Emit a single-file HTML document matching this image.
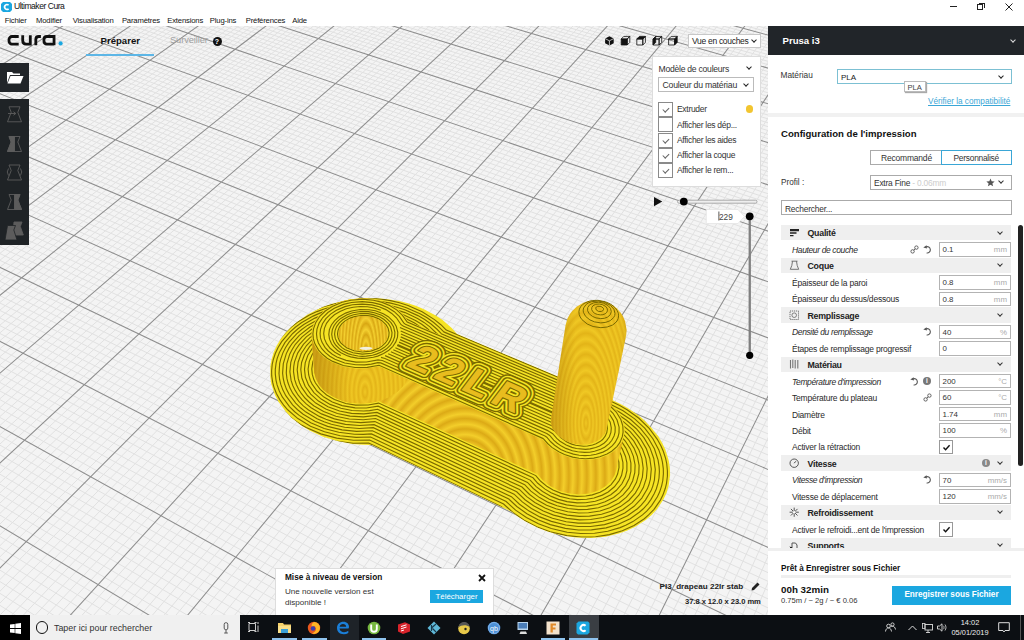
<!DOCTYPE html>
<html><head><meta charset="utf-8">
<style>
*{box-sizing:border-box;margin:0;padding:0}
html,body{width:1024px;height:640px;overflow:hidden;background:#fff;font-family:"Liberation Sans",sans-serif;color:#222}
.a{position:absolute;white-space:nowrap}
#vp{position:absolute;left:0;top:0;width:1024px;height:640px}
.title{left:14px;top:2px;font-size:8.6px;color:#111}
.menu{top:15.6px;font-size:7.7px;letter-spacing:-0.17px;color:#111}
.tb{background:#212529}
.chev{position:absolute;width:5px;height:5px;border-right:1.3px solid #333;border-bottom:1.3px solid #333;transform:rotate(45deg)}
.rp{left:768px;top:26px;width:256px;height:589px;background:#fff}
.lbl{font-size:8.3px;color:#333}
.inp{position:absolute;border:1px solid #bdbdbd;background:#fff;height:15px}
.hdr{position:absolute;left:781px;width:230px;height:15.5px;background:#f0f0f0}
.hdr b{position:absolute;left:26px;top:2.5px;font-size:8.6px;color:#222}
.row{position:absolute;left:792px;font-size:8.2px;color:#333}
.unit{position:absolute;right:4px;top:2px;font-size:8px;color:#aaa}
.val{position:absolute;left:4px;top:2px;font-size:8px;color:#333}
.cb{position:absolute;border:1px solid #999;background:#fff;width:14px;height:14px}
.ck{position:absolute;left:4px;top:2.5px;width:4px;height:7px;border-right:1.5px solid #222;border-bottom:1.5px solid #222;transform:rotate(45deg)}
.lcb{position:absolute;left:658px;width:15px;height:15px;border:1px solid #8a8a8a;background:#fff}
.lck{position:absolute;left:5px;top:3.2px;width:3.6px;height:6px;border-right:1px solid #666;border-bottom:1px solid #666;transform:rotate(45deg)}
.ltxt{position:absolute;left:677px;font-size:8.5px;letter-spacing:-0.3px;color:#333}
.tk{position:absolute;top:615px;height:25px}
</style></head><body>
<svg id="vp" width="1024" height="640" viewBox="0 0 1024 640">
<defs><clipPath id="cv"><rect x="0" y="26" width="768" height="589"/></clipPath></defs>
<g clip-path="url(#cv)">
<rect x="0" y="26" width="768" height="589" fill="#f4f4f4"/>
<path d="M762.2 21.1L772.5 23.8M751.8 21.3L772.4 26.9M739.6 21.1L772.3 30.0M729.1 21.3L772.2 33.1M706.5 21.4L771.9 39.4M694.4 21.2L771.8 42.6M683.9 21.4L771.7 45.8M671.8 21.2L771.6 49.0M659.7 21.0L771.4 52.2M649.2 21.3L771.3 55.5M637.1 21.0L773.0 59.3M626.7 21.3L772.9 62.7M614.6 21.1L772.7 66.0M592.0 21.1L772.5 72.8M581.6 21.4L772.4 76.3M569.5 21.2L772.2 79.7M559.0 21.4L772.1 83.2M547.0 21.2L772.0 86.7M536.5 21.5L771.9 90.3M524.5 21.3L771.7 93.9M512.5 21.0L771.6 97.5M502.0 21.3L771.5 101.1M479.5 21.3L771.2 108.5M467.5 21.1L773.0 112.8M457.0 21.4L772.8 116.5M445.1 21.2L772.7 120.3M434.6 21.4L772.6 124.2M422.6 21.2L772.4 128.0M412.1 21.5L772.3 131.9M400.2 21.2L772.2 135.8M388.2 21.0L772.0 139.8M365.8 21.1L771.8 147.8M355.3 21.3L771.6 151.9M343.4 21.1L771.5 155.9M333.0 21.4L771.3 160.1M321.0 21.2L771.2 164.2M310.6 21.4L771.0 168.4M298.7 21.2L772.9 173.3M288.2 21.4L772.8 177.6M276.3 21.2L772.7 181.9M253.9 21.3L772.4 190.7M242.1 21.1L772.2 195.1M231.6 21.3L772.1 199.6M219.7 21.1L771.9 204.1M209.3 21.4L771.8 208.7M197.4 21.2L771.6 213.3M187.0 21.4L771.5 217.9M175.1 21.2L771.3 222.6M164.7 21.4L771.2 227.3M8.9 21.7L-3.8 29.4M141.0 21.0L770.9 236.9M15.6 21.7L-4.7 34.1M130.6 21.3L772.9 242.5M22.3 21.7L-4.3 38.1M118.8 21.1L772.8 247.4M29.0 21.7L-3.9 42.1M108.3 21.3L772.6 252.4M35.7 21.7L-4.8 46.9M96.5 21.1L772.5 257.4M42.4 21.7L-4.4 51.0M86.0 21.4L772.3 262.4M49.1 21.7L-4.0 55.1M74.3 21.1L772.1 267.5M55.8 21.7L-4.9 60.1M63.8 21.4L772.0 272.7M62.6 21.8L-4.5 64.3M52.0 21.2L771.8 277.9M76.0 21.8L-3.7 72.9M29.8 21.2L771.5 288.4M82.7 21.8L-4.6 78.1M18.1 21.0L771.3 293.8M90.6 21.0L-4.2 82.5M7.6 21.3L771.2 299.2M97.3 21.0L-3.8 86.9M-4.1 21.1L771.0 304.7M104.1 21.0L-4.8 92.3M-4.6 25.0L770.8 310.2M110.8 21.0L-4.3 96.8M-3.8 29.4L770.7 315.8M117.5 21.0L-3.9 101.4M-4.2 33.4L772.9 322.3M124.2 21.0L-4.9 107.0M-4.7 37.5L772.7 328.0M130.9 21.0L-4.5 111.7M-3.9 42.1L772.5 333.7M144.4 21.0L-3.6 121.2M-4.8 50.4L772.2 345.4M151.1 21.0L-4.6 127.0M-4.0 55.1L772.0 351.3M157.8 21.0L-4.2 131.9M-4.5 59.4L771.9 357.3M164.6 21.0L-3.7 136.9M-5.0 63.7L771.7 363.4M171.3 21.0L-4.7 142.9M-4.1 68.6L771.5 369.5M178.0 21.0L-4.3 147.9M-4.6 73.0L771.4 375.7M184.8 21.0L-3.8 153.1M-3.7 78.0L771.2 382.0M191.5 21.0L-4.9 159.3M-4.2 82.5L771.0 388.3M198.3 21.1L-4.4 164.6M-4.7 87.0L770.8 394.7M211.7 21.1L-3.5 175.2M-4.3 96.8L773.0 408.7M218.5 21.1L-4.6 181.8M-4.8 101.5L772.8 415.3M225.2 21.1L-4.1 187.3M-4.0 106.9L772.6 422.0M232.0 21.1L-3.6 192.8M-4.5 111.7L772.5 428.7M238.7 21.1L-4.7 199.6M-5.0 116.5L772.3 435.6M245.4 21.1L-4.2 205.3M-4.1 122.0L772.1 442.5M252.2 21.1L-3.7 211.1M-4.6 127.0L771.9 449.5M258.9 21.1L-4.8 218.1M-3.7 132.6L771.7 456.5M265.7 21.1L-4.4 224.0M-4.2 137.7L771.6 463.7M279.2 21.1L-5.0 237.3M-3.8 148.7L771.2 478.2M286.0 21.1L-4.5 243.5M-4.3 154.0L771.0 485.6M292.7 21.1L-4.0 249.7M-4.9 159.3L770.8 493.1M299.5 21.1L-3.5 256.0M-3.9 165.3L770.6 500.7M306.2 21.1L-4.6 263.7M-4.5 170.8L770.4 508.3M313.0 21.1L-4.1 270.2M-3.5 177.0L773.0 517.3M319.7 21.1L-3.6 276.7M-4.1 182.6L772.8 525.1M326.5 21.1L-4.8 284.7M-4.6 188.2L772.6 533.1M333.3 21.1L-4.3 291.4M-3.6 194.6L772.4 541.1M346.8 21.1L-5.0 306.5M-4.7 206.3L772.0 557.5M353.6 21.1L-4.4 313.6M-3.8 213.0L771.8 565.9M360.3 21.1L-3.9 320.7M-4.3 219.0L771.6 574.3M367.1 21.1L-3.4 327.9M-4.9 225.1L771.4 582.9M373.9 21.1L-4.6 336.6M-3.9 232.0L771.2 591.6M380.7 21.1L-4.1 344.0M-4.5 238.2L771.0 600.3M387.4 21.1L-3.5 351.6M-3.4 245.3L770.8 609.2M394.2 21.1L-4.8 360.7M-4.0 251.7L770.5 618.2M401.0 21.1L-4.2 368.4M-4.6 258.2L752.5 618.8M414.5 21.1L-4.9 385.8M-4.2 272.2L713.3 618.6M421.3 21.2L-4.4 393.9M-4.8 279.0L695.2 619.2M428.1 21.2L-3.8 402.0M-3.7 286.7L677.1 619.8M434.9 21.2L-3.2 410.3M-4.3 293.6L656.2 619.0M441.7 21.2L-4.5 420.5M-4.9 300.6L638.1 619.6M448.4 21.2L-4.0 429.0M-3.8 308.6L617.1 618.8M455.2 21.2L-3.4 437.7M-4.5 315.8L599.0 619.4M462.0 21.2L-4.7 448.3M-3.4 324.0L578.1 618.6M468.8 21.2L-4.1 457.2M-4.0 331.5L560.0 619.2M482.4 21.2L-4.9 477.4M-3.5 347.5L521.0 619.0M489.2 21.2L-4.3 486.8M-4.1 355.3L502.9 619.6M496.0 21.2L-3.7 496.3M-4.8 363.1L482.1 618.8M502.8 21.2L-3.1 506.0M-3.6 372.1L463.9 619.4M509.6 21.2L-4.5 517.7M-4.3 380.2L443.2 618.6M516.4 21.2L-3.8 527.7M-4.9 388.4L425.0 619.2M523.2 21.2L-3.2 537.9M-3.8 397.7L406.9 619.9M530.0 21.2L-4.7 550.3M-4.4 406.1L386.2 619.0M536.8 21.2L-4.0 560.8M-3.3 415.7L368.0 619.7M550.4 21.2L-4.9 584.4M-4.6 433.3L329.2 619.5M557.2 21.2L-4.2 595.5M-3.4 443.3L308.5 618.7M564.0 21.2L-3.5 606.7M-4.1 452.4L290.4 619.3M570.8 21.2L-2.9 618.1M-4.8 461.7L272.2 619.9M577.6 21.2L8.8 618.2M-3.6 472.2L251.6 619.1M584.4 21.2L20.4 618.3M-4.3 481.7L233.4 619.7M591.3 21.2L32.1 618.5M-5.0 491.4L212.9 618.9M598.1 21.2L43.7 618.6M-3.7 502.5L194.7 619.5M604.9 21.2L55.4 618.7M-4.4 512.5L174.1 618.7M618.5 21.2L78.7 618.9M-3.9 534.2L137.8 619.9M625.3 21.2L90.3 619.0M-4.6 544.7L117.3 619.1M632.2 21.2L102.0 619.1M-3.3 556.7L99.1 619.7M639.0 21.3L113.7 619.2M-4.1 567.6L78.7 618.9M645.8 21.3L125.3 619.3M-4.8 578.6L60.5 619.5M652.6 21.3L137.0 619.4M-3.5 591.2L40.1 618.7M659.5 21.3L148.7 619.5M-4.2 602.7L21.9 619.3M666.3 21.3L160.4 619.6M-2.9 615.7L3.7 619.9M673.1 21.3L172.1 619.7M686.8 21.3L195.5 619.9M693.6 21.3L209.0 617.8M700.5 21.3L220.7 617.9M707.3 21.3L232.4 618.0M714.1 21.3L244.1 618.1M721.0 21.3L255.8 618.2M727.8 21.3L267.5 618.3M734.6 21.3L279.2 618.4M741.5 21.3L290.9 618.5M755.2 21.3L314.4 618.7M762.0 21.3L326.1 618.8M768.9 21.3L337.8 618.9M773.0 25.2L349.6 619.0M772.6 35.4L361.3 619.1M772.9 45.1L373.0 619.2M772.5 55.9L384.8 619.3M772.7 66.0L396.5 619.4M773.0 76.4L408.3 619.6M772.9 99.0L431.8 619.8M772.5 111.1L443.6 619.9M772.8 122.7L455.3 620.0M772.4 135.5L468.5 617.8M772.6 147.7L480.3 617.9M772.9 160.1L492.1 618.0M772.5 174.1L503.8 618.1M772.8 187.2L515.6 618.2M772.4 202.0L527.4 618.3M772.9 230.3L550.9 618.5M772.5 246.3L562.7 618.6M772.8 261.6L574.5 618.8M772.3 278.6L586.3 618.9M772.6 294.8L598.1 619.0M772.9 311.5L609.9 619.1M772.5 330.2L621.7 619.2M772.8 348.0L633.5 619.3M772.3 368.0L645.3 619.4M773.0 406.7L668.9 619.6M772.5 428.7L680.8 619.7M772.8 449.8L692.6 619.8M772.3 473.5L704.4 619.9M772.6 496.2L717.3 617.7M773.0 519.7L729.1 617.8M772.5 546.1L741.0 617.9M772.8 571.5L752.8 618.1M772.3 600.0L764.6 618.2" stroke="#e1e1e1" stroke-width="1" fill="none"/>
<path d="M717.0 21.1L772.1 36.2M604.1 21.3L772.6 69.4M490.0 21.1L771.3 104.8M377.8 21.3L771.9 143.8M264.4 21.0L772.5 186.3M2.1 21.7L-4.2 25.6M152.8 21.2L771.0 232.1M69.3 21.8L-4.1 68.6M41.6 21.4L771.7 283.1M137.7 21.0L-4.0 116.4M-4.4 46.2L772.4 339.5M205.0 21.1L-4.0 169.9M-3.9 92.2L770.6 401.1M272.4 21.1L-3.9 230.0M-4.7 142.9L771.4 470.9M340.0 21.1L-3.8 298.3M-4.2 200.4L772.2 549.3M407.8 21.1L-3.7 376.3M-3.6 265.6L734.4 619.4M475.6 21.2L-3.5 466.3M-4.6 339.0L541.9 619.8M543.6 21.2L-3.4 571.4M-3.9 424.4L347.3 618.9M611.7 21.2L67.0 618.8M-3.2 523.9L156.0 619.3M680.0 21.3L183.8 619.8M748.3 21.3L302.7 618.6M772.6 88.0L420.0 619.7M772.6 215.9L539.1 618.4M772.6 387.0L657.1 619.5" stroke="#8e8e8e" stroke-width="1.05" fill="none"/>
<clipPath id="bc"><path d="M612.9 399.8L457 334.1L451.7 328L442.6 320.1L435.7 315.4L424.5 309.4L416.4 306L408 303.2L399.2 301L385.7 298.9L376.5 298.2L362.7 298.4L353.5 299.2L344.4 300.7L331.3 304.1L322.9 307.1L314.9 310.7L307.3 314.8L297 321.9L290.9 327.2L285.4 333L280.7 339.1L276.8 345.5L273.7 352.2L271.6 359.2L270.3 366.3L270.2 377.1L271.3 384.3L274.9 395L278.5 401.8L285.7 411.6L291.6 417.7L302.1 425.9L310 430.7L323.1 436.7L337.5 441.1L352.6 443.9L363 444.8L372.1 444.9L511.8 511.8L517.8 516.4L525.7 521.5L538.5 528L547.6 531.5L557.1 534.3L566.7 536.3L576.5 537.6L591.1 538L605.4 536.7L618.9 533.5L627.3 530.5L635.2 526.8L645.7 520L651.9 514.8L657.1 509L663.4 499.6L666.5 492.9L668.6 486L670.1 475.2L669.9 468L668.8 460.7L665.5 450L662.2 443L658.2 436.3L650.7 426.9L645 421L638.6 415.5L628.1 408.2L620.5 404L612.6 400.3L612.9 399.8Z"/></clipPath>
<path d="M612.9 399.8L457 334.1L451.7 328L442.6 320.1L435.7 315.4L424.5 309.4L416.4 306L408 303.2L399.2 301L385.7 298.9L376.5 298.2L362.7 298.4L353.5 299.2L344.4 300.7L331.3 304.1L322.9 307.1L314.9 310.7L307.3 314.8L297 321.9L290.9 327.2L285.4 333L280.7 339.1L276.8 345.5L273.7 352.2L271.6 359.2L270.3 366.3L270.2 377.1L271.3 384.3L274.9 395L278.5 401.8L285.7 411.6L291.6 417.7L302.1 425.9L310 430.7L323.1 436.7L337.5 441.1L352.6 443.9L363 444.8L372.1 444.9L511.8 511.8L517.8 516.4L525.7 521.5L538.5 528L547.6 531.5L557.1 534.3L566.7 536.3L576.5 537.6L591.1 538L605.4 536.7L618.9 533.5L627.3 530.5L635.2 526.8L645.7 520L651.9 514.8L657.1 509L663.4 499.6L666.5 492.9L668.6 486L670.1 475.2L669.9 468L668.8 460.7L665.5 450L662.2 443L658.2 436.3L650.7 426.9L645 421L638.6 415.5L628.1 408.2L620.5 404L612.6 400.3L612.9 399.8Z" fill="#f6e424"/>
<path clip-path="url(#bc)" d="M409 355.3L404.9 349.1L399.2 343.6L393.9 339.9L385.9 336.1L377.2 333.5L367.9 332.1L358.4 332L349 333.3L340 335.8L331.8 339.6L324.7 344.4L320.2 348.7L315.6 355L312.8 361.8L311.8 368.9L312.3 374.4L313.8 379.6L315.5 383L320.2 389.4L326.6 395L334.4 399.6L345.7 403.5L355.7 405.1L368.3 405L378.6 403.1L535.8 475.6L540.7 481.3L547.2 486.6L553 490L561.2 493.4L570 495.6L576.9 496.3L585.7 496L592.3 494.9L600 492.2L605.3 489.3L611.1 484.6L615.4 478.9L617.6 474.1L619 467.5L618.9 462.3L617.3 455.4L614.1 448.9L610.6 444.2L604.9 438.7L598.1 433.9L592.3 431L584.3 428.2L577.8 426.8L571.2 426.2L409 355.3Z M411.9 353.5L407.9 347.7L401.7 341.8L394.3 336.9L385.5 333.1L378.1 331L368.1 329.6L357.9 329.6L347.9 330.9L338.3 333.7L329.8 337.6L322.1 342.7L317.2 347.4L312.3 354.2L309.3 361.3L308.1 369L308.7 375L310.3 380.5L312.1 384.1L317 391L323.9 397.1L332.3 402L342.2 405.6L355.1 407.9L366.3 408L378.1 406.2L533 477.8L537.8 483.3L544.7 488.9L551.1 492.7L559.9 496.4L569.6 498.8L577.3 499.6L586.7 499.3L594 498L602.3 495.1L608.2 491.9L614.4 486.8L619.1 480.6L621.6 475.3L623 468.2L622.9 462.4L621.2 455.2L618.5 449.5L613.9 442.9L609.1 438.1L602 432.7L595.9 429.4L587.5 426.1L580.4 424.3L572 423.3L411.9 353.5Z M414.8 351.7L409.7 345L402.7 338.8L396.1 334.8L386.7 330.7L376.9 328.2L366.2 327L355.3 327.3L344.7 329.1L334.6 332.3L325.5 336.8L317.7 342.6L312.7 347.9L307.9 355.2L305.2 362.9L304.5 369.4L305.4 377.3L308.6 385.2L313.9 392.6L321.2 399.1L330.1 404.4L340.9 408.3L352.1 410.5L363.7 411L369.6 410.6L377.6 409.3L530.2 480.1L536.2 486.6L542.6 491.5L551.2 496.4L558.6 499.4L567 501.6L577.1 502.9L585.6 502.8L595.3 501.3L602.8 498.8L610.8 494.7L616.4 490.3L621.9 483.8L625.4 476.8L626.9 470.6L626.9 462.9L625.5 456.4L622.3 448.9L618.3 443L612.2 436.6L604.5 430.8L597.6 426.9L588.6 423.4L580.8 421.5L572.7 420.5L414.8 351.7Z M417.6 350L412.3 343.2L404.8 336.8L396.3 331.8L386.1 327.8L377.3 325.7L365.9 324.5L354.4 324.9L343.7 326.7L333 330.1L323.4 334.9L315.1 341L309.6 346.7L304.5 354.5L301.6 362.5L300.8 369.5L301.8 377.8L305.1 386.3L310.7 394.2L318.5 401.1L328 406.7L339.5 411L351.5 413.4L363.9 413.9L377 412.4L527.5 482.4L533.3 488.5L540.2 494L549.3 499.2L557.3 502.4L566.5 504.9L577.3 506.2L586.6 506.1L596.9 504.5L605.1 501.8L613.6 497.4L619.7 492.6L625.6 485.6L629.3 478.2L630.9 471.3L630.9 463.1L629.4 456.1L625.9 448.1L621.6 441.7L615.1 434.9L606.8 428.6L599.8 424.7L591.7 421.4L581.9 418.8L573.5 417.6L417.6 350Z M420.3 348.2L415.2 341.8L407.2 335L398.3 329.7L387.5 325.6L378.1 323.3L366.1 322L353.9 322.4L342 324.5L330.7 328.2L321.2 333L312.4 339.4L306.5 345.5L301.1 353.8L298.1 362.2L297.2 369.7L298.2 378.4L299.6 383L301.7 387.4L307.6 395.8L315.7 403.1L325.8 409.1L337.4 413.5L350.1 416.1L363.3 416.8L376.3 415.4L524.7 484.7L530.9 491.1L539.6 497.6L548.3 502.4L557 505.7L568.2 508.5L578.4 509.6L587.6 509.4L598.4 507.7L607.4 504.8L616.4 500.1L623.1 494.9L629 487.9L632.6 481L634.8 472.7L635.1 465L633.4 456.4L630.4 448.9L625.3 441L619.4 434.5L610.8 427.6L603.4 423.3L593.7 419L584.4 416.4L574.4 414.8L420.3 348.2Z M423.1 346.4L416.2 338.4L408 332L399.5 327.3L388.1 323L376.7 320.5L364 319.5L351.1 320.3L340.8 322.2L329 326.1L319 331.1L309.7 337.9L303.4 344.4L297.7 353.1L294.5 361.8L293.7 366.7L293.5 371.6L294.7 379.7L296.3 384.5L298.6 389.2L301.5 393.7L305 398L309.1 402L313.7 405.7L323.6 411.5L335.9 416.2L349.3 419L363.3 419.7L375.6 418.5L522 487.1L529.6 494.5L537.2 500.1L546.6 505.2L555.9 508.8L567.7 511.8L578.7 513L588.5 512.8L600 511L609.8 507.8L619.2 502.9L626.4 497.2L632.6 489.8L636.5 482.3L638.8 473.6L639.1 465.3L637.3 456.2L634 448.1L628.6 439.8L622.2 432.8L613.9 426L605.2 420.9L595 416.5L585 413.6L575.2 412L423.1 346.4Z M425.8 344.6L418.9 336.9L409.5 329.7L399.5 324.4L387.3 320.2L376.4 318L363 317.1L349.5 318L337.5 320.5L325.3 324.9L316 329.7L306.3 336.9L299.2 344.7L296 349.2L293.5 354L290.8 362.3L289.9 371.8L291.1 380.4L292.8 385.5L295.2 390.4L298.2 395.2L301.9 399.7L306.2 403.9L311.1 407.8L321.5 413.9L334.4 418.9L346.2 421.5L360.8 422.6L374.9 421.6L519.4 489.4L526.8 496.6L534.8 502.5L545 508.1L554.8 512L567.2 515.1L579.1 516.4L589.5 516.1L601.6 514.2L611 511.3L620.4 506.6L629 500.2L635.3 493.1L639.4 486.1L642.4 477.1L643.2 468.2L641.9 458.6L638.9 449.9L633.7 440.9L627.2 433.2L617.9 425.2L609.9 420L601.2 415.8L588.8 411.6L576.1 409.3L425.8 344.6Z M428.4 342.8L421.7 335.4L411.8 327.8L401.3 322.3L388.5 317.9L374.9 315.3L360.7 314.7L346.7 316L335.2 318.5L322.4 323.3L311.9 329L302.1 336.8L295.4 344.3L292.3 349.2L289.7 354.2L286.8 363.8L286.3 373L286.9 378.4L288 382.8L290 388.1L292.7 393.2L298.8 401.4L303.3 405.9L308.5 410L319.3 416.4L325.9 419.2L332.9 421.6L345.4 424.4L359.4 425.5L374.1 424.7L516.7 491.8L525 499.7L533.6 505.8L543.3 511L553.6 515.1L566.7 518.4L579.5 519.8L590.5 519.5L603.2 517.5L613.1 514.4L623.2 509.4L632.2 502.6L639 495L643.3 487.6L646.4 478.1L647.2 468.6L645.9 458.6L642.6 449.2L637.1 439.9L630.2 431.6L620.3 423.2L611.8 417.8L602.6 413.3L589.6 408.9L577 406.6L428.4 342.8Z M431.1 341L423 332.5L412.4 324.9L401.9 319.7L388.4 315.3L375.5 312.9L360.7 312.3L346 313.6L333.9 316.3L320.5 321.2L309.7 327.2L299.3 335.3L292.3 343.3L288.9 348.4L286.3 353.6L283.3 363.6L282.6 373.3L283.3 379L284.4 383.5L286.4 389.1L289.2 394.5L295.7 403.1L300.5 407.8L305.9 412.1L317.1 418.8L324 421.8L331.4 424.3L344.6 427.3L359.2 428.5L373.3 427.7L514.1 494.2L522.3 501.9L531.4 508.5L541.6 514L552.5 518.3L566.2 521.7L578.1 523.1L589.8 523.1L602.8 521.3L613.4 518.2L624.8 512.9L634.1 506.3L641.8 498.1L647.2 489.1L648.9 484.8L650.4 479.1L651.3 469L649.8 458.5L646.3 448.6L640.5 438.8L633.2 430.1L624 422.1L615.1 416.3L604.1 410.8L591.9 406.6L577.9 403.8L431.1 341Z M433.7 339.2L429.6 334.6L424.7 330.1L414.6 323L403.7 317.6L389.6 313L376.1 310.6L360.7 309.9L345.4 311.2L332.6 314.1L318.7 319.2L307.4 325.4L301.7 329.5L296.6 333.9L289.1 342.2L285.6 347.5L282.8 353.1L280.8 358.8L279.7 363.4L279 373.6L279.6 379.5L280.7 384.2L282.9 390.1L285.8 395.7L292.6 404.8L297.6 409.7L303.2 414.3L314.9 421.2L327.6 426.4L342 429.9L356.5 431.4L372.4 430.8L511.4 496.7L519.5 504.2L529.1 511.1L539.8 516.9L551.4 521.4L565.8 525L578.2 526.5L590.6 526.5L604.5 524.6L615.6 521.3L627.5 515.8L637.4 508.7L641.2 505.2L645.4 500.1L651.1 490.6L652.8 486.1L654.4 480.1L655.3 469.4L653.8 458.5L650 447.9L643.9 437.7L636.1 428.5L626.5 420.2L617.2 414.1L605.5 408.3L592.8 404L578.8 401.1L433.7 339.2Z M436.2 337.4L427.3 328.5L421.7 324.2L415.5 320.4L403.4 314.7L388.5 310.2L375 308L358.9 307.5L343 309.2L329.3 312.5L314.9 318.1L303.8 324.5L298 328.8L292.7 333.5L284.9 342.7L279.4 352.5L277.2 358.4L276.1 363.2L275.3 369.4L275.3 373.9L276 380.1L277.1 384.9L279.3 391L282.3 396.9L289.5 406.6L294.7 411.7L299.2 415.4L310.7 422.7L324.2 428.5L338.7 432.3L354.3 434.2L363.3 434.4L371.5 433.9L508.8 499.1L516.8 506.5L526.9 513.7L538.1 519.8L550.3 524.6L565.3 528.4L578.4 530L591.4 529.9L606.1 527.9L617.8 524.5L630.2 518.7L639.3 512.3L643.3 508.8L648 503.6L651 499.4L654.3 493.6L656.3 489L658.1 482.8L659 478L659.4 471.5L659.1 466.6L658.1 460.1L654.4 448.8L648.4 438.2L640.4 428.3L630.6 419.5L619.3 411.9L606.9 405.8L593.7 401.3L579.8 398.5L436.2 337.4Z M438.8 335.5L429.9 326.9L424 322.4L417.6 318.5L405.1 312.6L389.6 307.9L375.5 305.6L358.8 305.1L342.2 306.9L328 310.3L320.4 312.9L313.1 316.1L301.4 322.8L295.3 327.3L289.9 332.1L281.7 341.6L278.1 347.5L275.3 353.5L273.2 359.8L272.2 364.5L271.6 370.9L271.7 375.9L272.7 382.4L273.9 387.1L276.4 393.5L279.8 399.6L283.9 405.5L287.7 409.8L297.9 418.6L310.5 426.2L324.5 431.8L340.1 435.7L356.1 437.3L370.6 437L506.2 501.6L515.6 510.1L526.4 517.5L538.4 523.7L551.3 528.5L567.2 532.2L580.9 533.5L594.6 533.2L607.7 531.2L620.1 527.6L625.7 525.3L632.9 521.6L642.5 514.9L646.7 511.1L651.6 505.6L657.4 496.7L659.6 492.1L661.7 485.6L662.8 480.5L663.4 473.7L663.3 468.6L662.4 461.8L661.1 456.6L658.8 449.9L652.9 438.7L644.7 428.2L634.7 418.9L623.1 410.8L610.4 404.2L596.6 399.3L580.7 395.8L438.8 335.5Z M441.3 333.7L436.8 329L431 324L424.7 319.6L417.9 315.6L404.9 309.8L396.9 307.2L388.7 305.2L373.7 303.1L356.4 302.9L339.2 305L324.8 308.7L316.9 311.6L309.4 315L297.3 322.2L291.2 327L285.7 332.2L277.6 342L274 348.2L271.8 352.9L269.7 359.4L268.6 364.4L268 371.1L268.1 376.2L269 383L270.3 388L272.9 394.6L275.4 399.4L279.6 405.6L283.2 410L288.8 415.6L293.6 419.6L300.6 424.4L306.2 427.6L320.8 433.9L336.7 438.1L353.6 440.2L369.7 440.1L503.6 504L512.8 512.4L524.1 520.2L536.6 526.7L550.1 531.7L566.9 535.6L581.3 537L595.6 536.7L609.4 534.6L622.3 530.8L634 525.5L644.3 518.7L648.6 514.9L654 509.3L660.4 500.1L662.9 495.1L665.3 488.3L666.5 483.3L667.4 476.2L667.4 470.7L666.7 463.5L665.6 458.3L663.3 451.3L661 446L657.3 439.3L649.2 428.4L638.9 418.3L627.1 409.8L619.7 405.6L612 401.8L597.5 396.6L581.7 393.2L441.3 333.7Z M443.8 331.9L439.6 327.6L433.7 322.5L427.1 317.8L420 313.7L406.4 307.7L398.2 305L389.6 302.9L374.2 300.7L365.2 300.3L356.2 300.5L347.3 301.3L338.4 302.7L323.4 306.6L315.2 309.6L307.4 313.1L295 320.5L288.6 325.4L282.8 330.8L274.4 341.1L270.7 347.4L268.4 352.3L266.1 359.1L265 364.3L264.3 371.3L264.4 376.5L265.4 383.6L266.7 388.8L269.4 395.7L272 400.7L276.2 407.1L280.1 411.8L285.9 417.6L290.8 421.7L298.1 426.7L304 430.1L312.4 434.1L319.1 436.6L328.4 439.4L335.7 441L353.2 443.2L368.7 443.1L501 506.5L510.1 514.7L521.8 522.8L534.9 529.7L549 535L558.8 537.6L566.6 539L581.7 540.5L596.6 540.2L611 538L624.5 534L636.7 528.4L647.4 521.3L652 517.4L657.5 511.5L664.2 501.9L666.8 496.6L669.3 489.5L670.6 484.3L671.4 476.9L671.5 471.1L670.7 463.6L669.5 458.3L667.1 451L664.7 445.4L660.8 438.4L652.4 427.1L641.5 416.6L629.4 407.8L621.6 403.3L613.6 399.5L598.4 394L582.6 390.6L443.8 331.9Z M446.3 330.1L440.9 324.7L434.5 319.6L422.1 311.8L408 305.5L399.4 302.8L390.6 300.6L381.5 299.1L372.3 298.2L362.9 297.9L353.6 298.3L344.4 299.3L335.2 300.9L319.9 305.1L311.6 308.3L303.6 312.1L290.8 320.1L284.3 325.3L278.5 331L273.4 337L270.2 341.7L266.5 348.3L264.3 353.6L262.1 360.6L261.1 365.9L260.6 373.2L260.9 378.8L262.1 386.1L263.7 391.4L266.6 398.5L269.6 403.7L274.2 410.3L278.3 415L284.6 421L289.9 425.2L301.7 432.6L310.5 436.7L317.3 439.3L332 443.4L342.3 445.2L350.3 446.1L367.7 446.2L498.4 509.1L509.5 518.7L522 527L535.9 533.9L547.9 538.2L563.3 542L579 543.9L594.7 543.9L609.9 542L624.1 538.2L637.2 532.6L648.6 525.4L654 521.1L659.9 515.1L667.2 505.2L669.8 500.2L672.7 492.9L674.3 487L675.4 479.3L675.6 473.8L675 466L673.8 459.9L671.5 452.2L669.4 446.9L665.6 439.5L662 433.9L656.7 427.2L646.2 416.5L639.1 410.8L631.6 405.7L623.6 401.1L615.1 397.1L599.3 391.5L583.6 387.9L446.3 330.1Z" fill="none" stroke="#7a6900" stroke-width="1.15"/>
<defs><radialGradient id="mw" gradientUnits="userSpaceOnUse" cx="465" cy="476" r="9" spreadMethod="repeat" gradientTransform="translate(465 476) scale(1 1.15) translate(-465 -476)"><stop offset="0" stop-color="#f3ce2a"/><stop offset="0.55" stop-color="#dcaa16"/><stop offset="1" stop-color="#f3ce2a"/></radialGradient><radialGradient id="ml" gradientUnits="userSpaceOnUse" cx="365" cy="392" r="8" spreadMethod="repeat" gradientTransform="translate(365 392) scale(0.55 1.3) translate(-365 -392)"><stop offset="0" stop-color="#f0c824"/><stop offset="0.55" stop-color="#e3b418"/><stop offset="1" stop-color="#f0c824"/></radialGradient></defs>
<path d="M620.2 452.2L624.6 432.3L624.4 427.4L623.4 422.5L621.4 417.7L617.4 411.6L612.1 406.1L605.6 401.4L600.2 398.5L592.3 395.5L584.1 393.6L576.9 393L407.8 321.3L404.8 316.3L399.4 310.8L394.5 307.2L386.9 303.2L378.4 300.4L367 298.6L355.2 298.7L343.8 300.8L333.3 304.8L324.4 310.4L317.5 317.4L313.8 323.7L311.9 330.5L311.7 335.6L314 370.6L315.3 377.5L318.5 384L323.4 389.9L329.9 395L337.7 399.1L348.8 402.4L358.4 403.6L368.1 403.3L378.8 401.2L537.5 474.3L542.5 480.1L550.4 486.3L559.9 490.9L568.2 493.3L578.8 494.4L589.2 493.4L598.6 490.4L606.5 485.6L611.3 480.6L614.7 474.9L616.2 470.3L620.2 452.2Z" fill="url(#mw)"/>
<path d="M359.9 298.4L348.3 299.7L339.5 302.2L331.4 305.8L324.4 310.4L318.7 315.9L314.6 322.1L312.2 328.7L311.7 335.6L314.2 372.3L316 379.1L319.6 385.5L323.4 389.9L328.2 393.8L337.7 399.1L344.2 401.4L351.2 402.9L363.2 403.6L375.2 402.1L382 400.2L388.4 397.6L397.5 391.7L401.9 387.5L405.4 382.9L408 378L409.8 371.2L410.7 332.7L409.7 325.9L406.8 319.4L402.3 313.5L396.2 308.3L388.9 304.1L380.6 301L371.7 299.1L359.9 298.4Z" fill="url(#ml)"/>
<defs><linearGradient id="sl" gradientUnits="userSpaceOnUse" x1="314" y1="0" x2="350" y2="0"><stop offset="0" stop-color="#8a5a00" stop-opacity="0.35"/><stop offset="1" stop-color="#8a5a00" stop-opacity="0"/></linearGradient></defs>
<path d="M359.9 298.4L348.3 299.7L339.5 302.2L331.4 305.8L324.4 310.4L318.7 315.9L314.6 322.1L312.2 328.7L311.7 335.6L314.2 372.3L316 379.1L319.6 385.5L323.4 389.9L328.2 393.8L337.7 399.1L344.2 401.4L351.2 402.9L363.2 403.6L375.2 402.1L382 400.2L388.4 397.6L397.5 391.7L401.9 387.5L405.4 382.9L408 378L409.8 371.2L410.7 332.7L409.7 325.9L406.8 319.4L402.3 313.5L396.2 308.3L388.9 304.1L380.6 301L371.7 299.1L359.9 298.4Z" fill="url(#sl)"/>
<path d="M542.8 439.7L547.9 445.5L552.6 449.3L559.9 453.7L566 456.3L574.6 458.7L581.2 459.6L587.8 459.8L594.3 459.2L600.4 457.9L607.9 455L612.8 452.1L618.1 447.3L621.1 443.2L623.7 437.1L624.6 432.3L624.2 425.8L622.2 419.3L617.4 411.6L610.6 404.8L602.1 399.4L596.3 396.8L590.3 394.9L584.1 393.6L576.9 393L407.8 321.3L403.6 314.9L397.9 309.5L390.9 305.1L382.8 301.7L373.9 299.4L362.3 298.4L350.6 299.3L341.6 301.5L331.4 305.8L324.4 310.4L318.7 315.9L314.6 322.1L312.2 328.7L311.6 333.9L312.1 339.1L313.7 344.1L317.4 350.5L321.4 354.9L326.3 358.9L331.9 362.2L342.9 366.4L355 368.5L367.5 368.3L378.6 366.2L542.8 439.7Z M383.8 343.3L377.8 347.8L370.1 350.5L362.8 351.2L354.3 350.1L347 347.1L344.4 345.2L341.6 342.4L340.1 340L338.9 336.7L338.6 334.1L339 330.7L340.3 327.4L343.2 323.6L346.4 321L351.2 318.4L355.6 317L361.5 316.1L367.5 316.3L373.2 317.4L378.3 319.5L381.9 321.8L385.3 325.3L387.1 328.4L388.1 332.6L387.8 336.1L386.2 340.3L383.8 343.3Z" fill="#f6e424" fill-rule="evenodd"/>
<path d="M543.3 438.6L547.6 443.5L551.9 447.4L558.8 451.8L564.5 454.5L572.7 457.1L579 458.3L585.5 458.7L593.8 458.1L599.8 456.8L607 454L611.7 451.2L616.9 446.6L619.8 442.6L622.3 436.7L623.1 432.1L622.8 425.8L620.8 419.5L616.3 412L609.7 405.5L601.4 400.2L595.8 397.7L590 395.8L583.9 394.6L576.4 393.8L407.2 322L402.5 315.3L397 310.1L390.1 305.8L382.2 302.4L373.6 300.3L362.3 299.2L350.9 300.2L342.1 302.2L332.2 306.5L325.3 311L319.8 316.3L315.8 322.4L313.5 328.8L312.9 333.9L313.4 338.9L314.9 343.8L318.6 350.1L322.4 354.3L327.2 358.2L332.7 361.4L343.3 365.5L355.1 367.5L367.3 367.4L379.1 365.3L543.3 438.6 M545 436L546.8 437.2L550.7 441.8L554.6 445.3L560.8 449.4L566 451.8L573.4 454.1L579.2 455.2L585 455.6L590.7 455.3L596.2 454.3L602.9 452.1L607.4 449.7L612.4 445.7L615.3 442.2L618 437.1L619 432.9L619.1 427.2L617.1 420L613 413.3L607 407.3L599.5 402.5L594.4 400.2L589.1 398.5L574.8 396.3L405.4 324.2L403.7 322.9L399.5 316.6L394.3 311.7L388 307.7L380.7 304.6L372.7 302.6L362.2 301.6L351.6 302.5L343.5 304.4L334.3 308.3L327.9 312.5L322.8 317.5L319.1 323.1L317 329.1L316.5 333.8L317 338.4L318.4 343L321.8 348.7L325.4 352.7L329.8 356.2L334.9 359.2L344.7 363L355.6 364.8L364.6 364.9L371.3 364.1L377.8 362.6L380.7 362.9L545 436 M546.7 433.5L549.7 435.4L553.7 440.1L557.3 443.3L561.4 446.1L565.9 448.4L572.4 450.7L577.6 451.8L584.5 452.4L589.7 452.2L594.6 451.3L600.6 449.3L604.6 447.2L609.1 443.6L611.7 440.5L614.1 435.9L615.1 432.1L615.2 427L613.4 420.6L609.7 414.5L604.3 409.1L597.6 404.8L588.3 401.2L583.3 400.2L575.9 399.5L573.2 398.7L403.6 326.3L401.1 324.7L396.4 317.8L391.7 313.4L385.9 309.6L379.2 306.8L371.8 304.9L362.1 304.1L352.4 304.8L344.9 306.6L336.4 310.2L330.6 314.1L325.9 318.7L322.5 323.8L320.5 329.4L320.1 333.6L320.5 337.9L321.9 342.1L325 347.4L328.3 351L332.3 354.3L337 357L346.1 360.4L356 362.1L366.4 362L378.1 359.9L382.3 360.5L546.7 433.5 M548.4 430.9L552.7 433.7L556.8 438.4L560 441.2L566.2 445.1L571.9 447.4L576.4 448.5L585.6 449.3L590.1 448.9L595.7 447.5L599.5 446L604 443.2L606.7 440.7L609.4 436.8L610.9 432.5L611.3 428L610.2 422.2L606.4 415.7L601.7 411L594.4 406.4L586 403.6L575.4 402.3L571.6 401.1L399.9 327.5 M380.8 310.2L374.3 308L367.4 306.8L360.2 306.5L353.1 307.2L346.3 308.8L340 311.4L334.4 314.7L329.9 318.8L326.5 323.4L324.4 328.4L323.7 333.5L324.4 338.7L326.6 343.7L330.1 348.3L334.9 352.3L340.8 355.6 M381 357.4L385 358.5L548.4 430.9 M550.1 428.3L554.5 430.9L560.7 437.6L566.9 442L571.7 444.1L575.6 445.3L583.6 446.2L587.5 446L592.5 445L596 443.8L600 441.6L602.6 439.5L605.2 436.2L606.8 432.6L607.4 428.6L606.7 423.7L603.8 417.9L599 412.8L592.6 408.8L585.3 406.3L574.9 405.1L570 403.6L400.7 331 M385.1 355.6L550.1 428.3 M388.2 353.8L551.8 425.8L557.1 428.9L562.9 435.1L566.1 437.8L573 441.4L577.5 442.6L582 443.1L589.7 442.4L593.7 441.1L597.1 439.2L599.9 436.7L602 433.9L602.9 431.5L603.5 428.2L603.1 424.8L601.9 421.4L597.9 416L594.6 413.4L590.9 411.2L584.6 409.1L574.5 407.9L568.3 406.1L400.9 334 M390.9 351.8L553.5 423.2L559.8 427L567.9 435.1L573.5 438.3L580.8 440L588.1 439.5L591.4 438.4L594.3 436.8L596.6 434.8L598.6 431.8L599.5 427L598.2 422.1L594.9 417.6L589.1 413.7L583.9 411.9L574 410.7L566.7 408.5L400.7 336.9 M393.3 349.8L555.2 420.7L562.5 425L570 432.7L574.9 435.6L580.7 437L586.5 436.5L591.4 434.4L593.2 432.9L594.8 430.5L595.6 426.7L594.6 422.8L591.9 419.2L587.4 416.1L582.5 414.5L570.6 412.9L565.1 411L400 339.6 M395.4 347.7L556.8 418.2L565.1 423L572.4 430.5L576.4 432.9L580.7 433.9L585 433.6L588.5 432.1L591.1 429.2L591.6 426.4L590.7 423.1L588.6 420.5L585.1 418.3L581.4 417.3L569.8 415.7L563.4 413.5L399 342.1 M397.1 345.4L558.5 415.7L567.8 421.1L570.4 423.3L575.3 428.7L577.5 430.2L580.6 430.9L583.4 430.7L585.7 429.7L587.3 427.9L587.7 426.1L587.1 423.9L585.8 422.3L583.5 420.8L568.9 418.5L561.8 416L397.6 344.6 M385.4 343L387.6 339.7L388.8 336.2L389.1 332.6L388 327.9L386 324.7L382.1 320.9L378.3 318.6L372.4 316.4L367.6 315.6L361 315.5L354.5 316.6L350 318.1L344.8 321.1L341.7 323.9L339.4 327.1L338 330.6L337.5 334.1L338.1 337.7L339.6 341.1L341.2 343.3L346.6 347.8L354 350.8L362.3 352L370.8 351.1L378.4 348.4L382.3 345.9L385.4 343Z M387.9 344.1L390.3 340.4L391.7 336.5L392 332.5L390.7 327.3L388.5 323.7L384.1 319.5L380 317L373.4 314.6L368.1 313.6L360.7 313.5L353.5 314.7L348.5 316.4L342.8 319.8L339.3 322.9L336.7 326.4L335.1 330.3L334.6 334.2L335.2 338.2L336.9 342L338.6 344.4L342 347.6L344.7 349.5L352.9 352.8L362.2 354.1L371.6 353.2L380.2 350.1L384.4 347.3L387.9 344.1Z M390.4 345.2L393.1 341.1L394.6 336.8L394.9 332.4L393.5 326.7L391 322.7L386.2 318.1L381.6 315.3L374.4 312.7L368.6 311.6L360.5 311.5L352.6 312.8L347.1 314.8L340.7 318.4L336.9 321.8L334 325.7L332.3 329.9L331.7 334.3L332.4 338.7L334.2 342.9L336.1 345.5L339.8 349.1L342.8 351.1L348 353.6L351.8 354.8L357.9 356L362.1 356.3L366.3 356.1L372.5 355.2L376.4 354.1L381.9 351.8L386.6 348.8L390.4 345.2Z M392.9 346.3L395.8 341.9L397.5 337.2L397.8 332.4L396.2 326.1L393.6 321.8L388.3 316.7L383.3 313.7L375.4 310.8L369 309.7L360.2 309.5L351.6 311L345.6 313.1L338.7 317L334.5 320.8L331.4 325L329.4 329.6L328.8 334.4L329.5 339.2L331.5 343.8L333.6 346.7L337.6 350.5L340.9 352.8L346.6 355.5L350.7 356.9L357.4 358.1L362 358.4L366.6 358.3L373.4 357.3L377.7 356.1L383.6 353.5L388.8 350.2L392.9 346.3Z" fill="none" stroke="#7a6900" stroke-width="1.15"/>
<g transform="matrix(3.785 1.651 -2.372 3.145 471.8 379.6)" fill="none" stroke="#7a6900" stroke-width="3.9" stroke-linejoin="round"><text x="0" y="3.6" text-anchor="middle" font-family="Liberation Sans" font-weight="bold" font-size="10" letter-spacing="1.6">22LR</text></g>
<g transform="matrix(3.785 1.651 -2.372 3.145 471.8 379.6)" fill="none" stroke="#f6e424" stroke-width="3.1" stroke-linejoin="round"><text x="0" y="3.6" text-anchor="middle" font-family="Liberation Sans" font-weight="bold" font-size="10" letter-spacing="1.6">22LR</text></g>
<g transform="matrix(3.785 1.651 -2.372 3.145 471.8 379.6)" fill="none" stroke="#7a6900" stroke-width="2.3" stroke-linejoin="round"><text x="0" y="3.6" text-anchor="middle" font-family="Liberation Sans" font-weight="bold" font-size="10" letter-spacing="1.6">22LR</text></g>
<g transform="matrix(3.785 1.651 -2.372 3.145 471.8 379.6)" fill="none" stroke="#f6e424" stroke-width="1.5" stroke-linejoin="round"><text x="0" y="3.6" text-anchor="middle" font-family="Liberation Sans" font-weight="bold" font-size="10" letter-spacing="1.6">22LR</text></g>
<g transform="matrix(3.785 1.651 -2.372 3.145 471.8 379.6)" fill="none" stroke="#7a6900" stroke-width="0.6" stroke-linejoin="round"><text x="0" y="3.6" text-anchor="middle" font-family="Liberation Sans" font-weight="bold" font-size="10" letter-spacing="1.6">22LR</text></g>
<g transform="matrix(3.785 1.651 -2.372 3.145 471.8 379.6)" fill="#e8bc1e"><text x="0" y="3.6" text-anchor="middle" font-family="Liberation Sans" font-weight="bold" font-size="10" letter-spacing="1.6">22LR</text></g>
<defs><radialGradient id="mh" gradientUnits="userSpaceOnUse" cx="366" cy="352" r="7" spreadMethod="repeat" gradientTransform="translate(366 352) scale(0.45 1.6) translate(-366 -352)"><stop offset="0" stop-color="#f4d030"/><stop offset="0.55" stop-color="#d9a814"/><stop offset="1" stop-color="#f4d030"/></radialGradient></defs>
<path d="M384.5 342.6L386.6 339.5L388 335.2L388 331.8L386.7 327.6L384.7 324.5L381.1 321.2L377.4 319L372.1 317.1L367.5 316.3L361.5 316.1L355.6 317L351.2 318.4L346.4 321L343.2 323.6L340.3 327.4L339 330.7L338.6 334.1L338.9 336.7L340.1 340L341.6 342.4L344.4 345.2L347 347.1L354.3 350.1L362.8 351.2L371.3 350.2L378.8 347.2L381.5 345.4L384.5 342.6Z" fill="url(#mh)"/>
<ellipse cx="366" cy="348.3" rx="6.5" ry="1.6" fill="#f2f0e0"/>
<defs><radialGradient id="mp" gradientUnits="userSpaceOnUse" cx="586" cy="423" r="7" spreadMethod="repeat" gradientTransform="translate(586 423) scale(0.5 1.5) translate(-586 -423)"><stop offset="0" stop-color="#f0c824"/><stop offset="0.55" stop-color="#e3b418"/><stop offset="1" stop-color="#f0c824"/></radialGradient></defs>
<path d="M620.7 361.7L626.1 335.8L626.6 329.9L625.1 321.2L622.9 316.2L620.7 312.7L616.7 308.3L612.6 305.2L606.7 302.2L600.1 300.5L594.4 300.3L587.7 301.3L582.9 303L576.9 306.6L572.2 311.1L570.3 313.6L567.5 318.6L565.6 325.1L551 418.8L551.1 424L552.4 428.2L555.5 433.1L559 436.6L564.5 440.3L569.5 442.6L576.4 444.3L581.9 444.8L587.4 444.4L593.7 442.7L599.1 439.9L603.2 436.1L605 433.4L606.4 429.5L620.7 361.7Z" fill="url(#mp)"/>
<defs><linearGradient id="sp" gradientUnits="userSpaceOnUse" x1="552" y1="0" x2="630" y2="0"><stop offset="0" stop-color="#8a5a00" stop-opacity="0.3"/><stop offset="0.3" stop-color="#8a5a00" stop-opacity="0"/><stop offset="0.85" stop-color="#8a5a00" stop-opacity="0"/><stop offset="1" stop-color="#8a5a00" stop-opacity="0.15"/></linearGradient></defs>
<path d="M620.7 361.7L626.1 335.8L626.6 329.9L625.1 321.2L622.9 316.2L620.7 312.7L616.7 308.3L612.6 305.2L606.7 302.2L600.1 300.5L594.4 300.3L587.7 301.3L582.9 303L576.9 306.6L572.2 311.1L570.3 313.6L567.5 318.6L565.6 325.1L551 418.8L551.1 424L552.4 428.2L555.5 433.1L559 436.6L564.5 440.3L569.5 442.6L576.4 444.3L581.9 444.8L587.4 444.4L593.7 442.7L599.1 439.9L603.2 436.1L605 433.4L606.4 429.5L620.7 361.7Z" fill="url(#sp)"/>
<path d="M603.3 310.3L603.6 309.3L603.4 308.2L601 306.4L597.7 306.3L596.4 307L595.7 307.9L596.3 310L598.5 311.4L601.3 311.5L603.3 310.3Z M606.9 312.3L607.5 310.2L607 308.1L605.3 306.2L602.3 304.6L599.2 304L595.7 304.3L593 305.7L591.8 307.5L591.7 309.6L592.8 311.7L594.9 313.5L597.3 314.4L600.4 314.9L602.9 314.7L605.1 313.8L606.9 312.3Z M610.3 314.7L611.3 311.6L610.5 308.4L608 305.5L603.4 303.1L598.8 302.2L593.7 302.8L589.6 304.8L587.7 307.6L587.6 310.7L589.2 313.8L592.5 316.4L596 317.9L600.7 318.6L604.4 318.3L607.7 317L610.3 314.7Z M613.7 317.5L614.7 315.6L615 313.5L613.9 309.2L610.5 305.4L604.5 302.2L598.4 301L591.5 301.7L588.2 303L586.2 304.4L583.6 308L583.2 310.1L583.4 312.3L585.6 316.4L589.9 319.9L594.6 321.9L600.8 322.9L605.9 322.3L610.2 320.7L613.7 317.5Z M617 321L618.2 318.5L618.6 315.9L618.3 313.2L617.2 310.6L615.4 308.1L613 305.8L610 303.8L605.5 301.8L597.9 300.3L592.8 300.5L589.3 301.2L585.1 302.9L582.6 304.6L580.7 306.7L579.4 309.1L578.9 311.7L579.2 314.4L580.2 317L581.9 319.6L587.2 324L593.1 326.5L600.9 327.7L607.2 327L612.6 325L615.1 323.1L617 321Z" fill="none" stroke="#7a6900" stroke-width="1"/>
</g>
</svg>

<!-- title + menu -->
<div class="a" style="left:0;top:0;width:1024px;height:26px;background:#fff"></div>
<svg class="a" style="left:1px;top:2px" width="11" height="10" viewBox="0 0 11 10"><path d="M2 0H9L11 2V8L9 10H2L0 8V2Z" fill="#1ba7e0"/><path d="M7.6 3.2A2.4 2.4 0 1 0 7.6 6.8" stroke="#fff" stroke-width="1.6" fill="none"/></svg>
<div class="a title" style="font-size:8.6px;letter-spacing:-0.5px;top:1px">Ultimaker Cura</div>
<div class="a menu" style="left:4.7px">Fichier</div>
<div class="a menu" style="left:36px">Modifier</div>
<div class="a menu" style="left:72.7px">Visualisation</div>
<div class="a menu" style="left:121.9px">Paramètres</div>
<div class="a menu" style="left:167.2px">Extensions</div>
<div class="a menu" style="left:209.8px">Plug-ins</div>
<div class="a menu" style="left:245.7px">Préférences</div>
<div class="a menu" style="left:292.2px">Aide</div>
<div class="a" style="left:950px;top:6px;width:7px;height:1px;background:#222"></div>
<div class="a" style="left:977px;top:4px;width:6px;height:6px;border:1px solid #222"></div>
<div class="a" style="left:979px;top:2.5px;width:6px;height:5px;border-top:1px solid #222;border-right:1px solid #222"></div>
<svg class="a" style="left:1005px;top:3px" width="8" height="8"><path d="M0.5 0.5L7.5 7.5M7.5 0.5L0.5 7.5" stroke="#222" stroke-width="1"/></svg>

<!-- cura logo & tabs -->
<svg class="a" style="left:0;top:26px" width="70" height="26" viewBox="0 26 70 26"><g fill="none" stroke="#111" stroke-width="2.8"><path d="M18.7 36.5H12A3 3 0 0 0 9 39.5V41.1A3 3 0 0 0 12 44.1H18.7"/><path d="M22.7 35.3V40.5Q22.7 44.1 26.3 44.1H30.3V35.3"/><path d="M35.8 45.3V39.5Q35.8 36.5 38.8 36.5H40.9"/><path d="M54.05 45.3V36.5H47Q43.95 36.5 43.95 39.5V41.1Q43.95 44.1 47 44.1H54.05"/></g><circle cx="60.6" cy="43.4" r="2.1" fill="#1ba7e0"/></svg>
<div class="a" style="left:100.5px;top:35px;font-size:9.6px;font-weight:bold;color:#111">Préparer</div>
<div class="a" style="left:86px;top:53.5px;width:68px;height:2px;background:#5db6e6"></div>
<div class="a" style="left:170px;top:35.3px;font-size:9.3px;letter-spacing:-0.1px;color:#a0a0a0">Surveiller</div>
<div class="a" style="left:212.5px;top:36.5px;width:9px;height:9px;border-radius:50%;background:#111;color:#fff;font-size:7px;font-weight:bold;text-align:center;line-height:9px">?</div>

<!-- left toolbar -->
<div class="a tb" style="left:0;top:63px;width:29px;height:29px"></div>
<svg class="a" style="left:6px;top:70px" width="18" height="15" viewBox="0 0 18 15"><path d="M1 2H6L7.5 3.5H14V5H4L1 13Z" fill="#fff"/><path d="M4.5 6H17.5L14.5 13.5H1.5Z" fill="#fff"/></svg>
<div class="a tb" style="left:0;top:99px;width:29px;height:146px;background:#1f2326"></div>
<svg class="a" style="left:0;top:0" width="29" height="250" viewBox="0 0 29 250" fill="none" stroke="#5c5c5c" stroke-width="0.9" stroke-linejoin="round"><path d="M9.0 106.8H20.0L17.8 112.3L21.5 121.8H7.5L11.2 112.3Z"/><path d="M8 113.5H15.5M13.5 111.8L15.8 113.5L13.5 115.2" /><path d="M9.0 136.5H20.0L17.8 142.0L21.5 151.5H7.5L11.2 142.0Z"/><path d="M14.5 136.5V151.5H7.5L11.2 142ZM14.5 136.5H9L11.2 142" fill="#5c5c5c"/><path d="M9.0 165.0H20.0L17.8 170.5L21.5 180.0H7.5L11.2 170.5Z"/><path d="M8.5 168.5Q6 172 8.5 175.5M20.5 168.5Q23 172 20.5 175.5"/><path d="M9.0 194.5H20.0L17.8 200.0L21.5 209.5H7.5L11.2 200.0Z"/><path d="M14.5 194.5H20L17.8 200L21.5 209.5H14.5Z" fill="#5c5c5c"/><path d="M14 222H22L20.3 226.5L23.3 235H13Z" fill="#5c5c5c"/><path d="M7.5 225.5H15.5L13.8 230L17 240H5Z" fill="#5c5c5c" stroke="#1f2326" stroke-width="0.8"/></svg>

<!-- view toolbar -->
<svg class="a" style="left:0;top:0" width="768" height="60" viewBox="0 0 768 60"><path d="M609.4 36.2L613.7 38.4V43.2L609.4 45.4L605.1 43.2V38.4Z" fill="#111"/><path d="M605.1 38.6L609.4 40.8L613.7 38.6M609.4 40.8V45.4" fill="none" stroke="#fff" stroke-width="0.7"/><path d="M621.2 39.0H627.2V45.0H621.2Z" fill="#111"/><path d="M621.2 39.0H627.2V45.0H621.2ZM621.2 39.0L623.8 36.4H629.8L627.2 39.0ZM627.2 39.0L629.8 36.4V42.4L627.2 45.0Z" fill="none" stroke="#111" stroke-width="0.8" stroke-linejoin="round"/><path d="M636.8 39.0L639.4 36.4H645.4L642.8 39.0Z" fill="#111"/><path d="M636.8 39.0H642.8V45.0H636.8ZM636.8 39.0L639.4 36.4H645.4L642.8 39.0ZM642.8 39.0L645.4 36.4V42.4L642.8 45.0Z" fill="none" stroke="#111" stroke-width="0.8" stroke-linejoin="round"/><path d="M653.1 39.0L655.7 36.4V42.4L653.1 45.0Z" fill="#111"/><path d="M653.1 39.0H659.1V45.0H653.1ZM653.1 39.0L655.7 36.4H661.7L659.1 39.0ZM659.1 39.0L661.7 36.4V42.4L659.1 45.0Z" fill="none" stroke="#111" stroke-width="0.8" stroke-linejoin="round"/><path d="M653.1 39.0L655.7 36.4V42.4L653.1 45.0Z" fill="none" stroke="#111" stroke-width="0.8"/><path d="M674.6 39.0L677.2 36.4V42.4L674.6 45.0Z" fill="#111"/><path d="M668.6 39.0H674.6V45.0H668.6ZM668.6 39.0L671.2 36.4H677.2L674.6 39.0ZM674.6 39.0L677.2 36.4V42.4L674.6 45.0Z" fill="none" stroke="#111" stroke-width="0.8" stroke-linejoin="round"/></svg>
<div class="a" style="left:687.5px;top:33.5px;width:73px;height:14px;background:#fff;border:1px solid #c8c8c8"></div>
<div class="a" style="left:692px;top:36px;font-size:8.5px;letter-spacing:-0.3px;color:#222">Vue en couches</div>
<div class="chev" style="left:751.5px;top:37.5px;width:4px;height:4px;border-color:#222"></div>

<!-- layer panel -->
<div class="a" style="left:651.5px;top:55.5px;width:109px;height:131px;background:#fff;border:1px solid #ddd"></div>
<div class="a" style="left:658.5px;top:63.8px;font-size:8.6px;letter-spacing:-0.25px;color:#333">Modèle de couleurs</div>
<div class="chev" style="left:747px;top:64.5px;width:4px;height:4px;border-color:#222"></div>
<div class="a" style="left:658px;top:77px;width:96px;height:15px;background:#fff;border:1px solid #bbb"></div>
<div class="a" style="left:662.5px;top:80.3px;font-size:8.7px;letter-spacing:-0.22px;color:#333">Couleur du matériau</div>
<div class="chev" style="left:744px;top:81.5px;width:4px;height:4px;border-color:#222"></div>
<div class="lcb" style="top:102px"><div class="lck"></div></div>
<div class="lcb" style="top:117px"></div>
<div class="lcb" style="top:132.5px"><div class="lck"></div></div>
<div class="lcb" style="top:147.5px"><div class="lck"></div></div>
<div class="lcb" style="top:162.5px"><div class="lck"></div></div>
<div class="ltxt" style="top:104px">Extruder</div>
<div class="ltxt" style="top:119.5px">Afficher les dép...</div>
<div class="ltxt" style="top:134.5px">Afficher les aides</div>
<div class="ltxt" style="top:150px">Afficher la coque</div>
<div class="ltxt" style="top:164.5px">Afficher le rem...</div>
<div class="a" style="left:745.5px;top:105px;width:7.5px;height:7.5px;border-radius:50%;background:#f2c530"></div>

<!-- layer sliders -->
<svg class="a" style="left:650px;top:192px" width="118" height="170" viewBox="650 192 118 170">
<path d="M654 197L662.3 201.6L654 206.3Z" fill="#111"/>
<rect x="677.5" y="200.2" width="79.5" height="3" rx="1.5" fill="#eee" stroke="#999" stroke-width="0.8"/>
<circle cx="683.8" cy="201.6" r="3.9" fill="#000"/>
<path d="M706.3 209.5H738L744.4 216.5L738 223.5H706.3Z" fill="#fff" stroke="#e4e4e4" stroke-width="0.8"/>
<rect x="748.6" y="216" width="2.3" height="139" fill="#808080"/>
<circle cx="749.7" cy="216.3" r="3.9" fill="#000"/>
<circle cx="749.7" cy="355.3" r="3.6" fill="#000"/>
<rect x="718.5" y="211.5" width="0.8" height="9" fill="#333"/>
</svg>
<div class="a" style="left:719px;top:211.5px;font-size:8.3px;color:#444">229</div>

<!-- filename -->
<div class="a" style="left:659.5px;top:581.5px;font-size:8.1px;font-weight:bold;color:#222">PI3_drapeau 22lr stab</div>
<svg class="a" style="left:751px;top:581.5px" width="9" height="9" viewBox="0 0 9 9"><path d="M6.5 0.5L8.5 2.5L3 8L0.5 8.5L1 6Z" fill="#222"/></svg>
<div class="a" style="left:685px;top:596.5px;font-size:7.6px;letter-spacing:-0.05px;font-weight:bold;color:#222">37.8 x 12.0 x 23.0 mm</div>

<!-- notification -->
<div class="a" style="left:274.5px;top:568px;width:219px;height:47px;background:#fff;border:1px solid #ddd;border-bottom:none"></div>
<div class="a" style="left:285px;top:573px;font-size:8.25px;font-weight:bold;color:#111">Mise à niveau de version</div>
<svg class="a" style="left:478px;top:574px" width="8" height="8"><path d="M1 1L7 7M7 1L1 7" stroke="#111" stroke-width="1.8"/></svg>
<div class="a" style="left:285px;top:586.5px;font-size:8.1px;color:#333">Une nouvelle version est</div>
<div class="a" style="left:285px;top:598px;font-size:8.1px;color:#333">disponible !</div>
<div class="a" style="left:430px;top:590px;width:53px;height:13px;background:#1ba7e0;color:#fff;font-size:7.9px;text-align:center;line-height:13px">Télécharger</div>

<!-- right panel -->
<div class="a rp"></div>
<div class="a" style="left:768px;top:26px;width:256px;height:29px;background:#212529"></div>
<div class="a" style="left:782.5px;top:34.5px;font-size:9.6px;font-weight:bold;color:#fff">Prusa i3</div>
<div class="chev" style="left:1011px;top:37.5px;width:4px;height:4px;border-color:#ddd"></div>
<div class="a lbl" style="left:780.5px;top:69.8px;font-size:8.3px">Matériau</div>
<div class="a" style="left:836.5px;top:69px;width:175px;height:15px;border:1px solid #7cc0d3;background:#fff"></div>
<div class="a" style="left:841px;top:72.5px;font-size:8px;color:#222">PLA</div>
<div class="chev" style="left:999px;top:73.5px;width:4px;height:4px;border-color:#222"></div>
<div class="a" style="left:904px;top:81px;width:21.5px;height:11px;background:#fff;border:1px solid #bbb;box-shadow:1px 1px 1px #aaa"></div>
<div class="a" style="left:907.5px;top:82.5px;font-size:7.6px;color:#444">PLA</div>
<div class="a" style="left:928px;top:96.5px;font-size:8.2px;color:#3aa6d6;text-decoration:underline">Vérifier la compatibilité</div>
<div class="a" style="left:768px;top:113px;width:256px;height:4px;background:#f1f1f1"></div>
<div class="a" style="left:781px;top:127.6px;font-size:9.6px;font-weight:bold;color:#111">Configuration de l'impression</div>
<div class="a" style="left:870px;top:150px;width:71.5px;height:15px;border:1px solid #aaa;background:#fff"></div>
<div class="a" style="left:940.5px;top:150px;width:71px;height:15px;border:1.3px solid #3aa6d6;background:#fff"></div>
<div class="a" style="left:881px;top:153px;font-size:8.5px;letter-spacing:-0.2px;color:#333">Recommandé</div>
<div class="a" style="left:953.5px;top:153px;font-size:8.4px;letter-spacing:-0.25px;color:#333">Personnalisé</div>
<div class="a lbl" style="left:781px;top:178px;font-size:8.2px">Profil :</div>
<div class="a" style="left:870px;top:175px;width:141.5px;height:15px;border:1px solid #aaa;background:#fff"></div>
<div class="a" style="left:874px;top:178px;font-size:8.4px;letter-spacing:-0.2px;color:#333">Extra Fine <span style="color:#ccc">- 0.06mm</span></div>
<svg class="a" style="left:986px;top:178px" width="9" height="9" viewBox="0 0 10 10"><path d="M5 0.5L6.3 3.6L9.6 3.8L7.1 6L7.9 9.3L5 7.5L2.1 9.3L2.9 6L0.4 3.8L3.7 3.6Z" fill="#555"/></svg>
<div class="chev" style="left:999px;top:179px;width:4px;height:4px;border-color:#333"></div>
<div class="a" style="left:781px;top:200px;width:230.5px;height:15px;border:1px solid #aaa;background:#fff"></div>
<div class="a" style="left:785px;top:203.5px;font-size:8.4px;letter-spacing:-0.2px;color:#333">Rechercher...</div>
<div class="a" style="left:768px;top:219px;width:256px;height:328.5px;overflow:hidden">
<div class="a" style="left:13px;top:6.00px;width:230px;height:15.3px;background:#efefef"></div>
<svg class="a" style="left:21px;top:8.50px" width="11" height="11" viewBox="0 0 11 11"><path d="M1 1H10V3.2H1ZM1 4.3H7.5V5.8H1ZM1 7H4.5V8.2H1Z" fill="#222"/></svg>
<div class="a" style="left:39.5px;top:9.30px;font-size:8.8px;letter-spacing:-0.24px;font-weight:bold;color:#222">Qualité</div>
<div class="chev" style="left:230.0px;top:10.5px;width:4px;height:4px;border-color:#333"></div>
<div class="a" style="left:24px;top:26.05px;font-size:8.5px;letter-spacing:-0.37px;font-style:italic;color:#2a2a2a">Hauteur de couche</div>
<div class="a" style="left:170.5px;top:23.35px;width:72.5px;height:14.5px;border:1px solid #b3b3b3;background:#fff"></div>
<div class="a" style="left:174.5px;top:26.25px;font-size:7.9px;color:#333">0.1</div>
<div class="a" style="left:150px;width:89px;text-align:right;top:26.25px;font-size:7.9px;color:#aaa">mm</div>
<svg class="a" style="left:155.0px;top:25.95px" width="9" height="9" viewBox="0 0 9 9"><path d="M2.9 1.9A3.2 3.2 0 1 1 3.6 8" fill="none" stroke="#555" stroke-width="1.1"/><path d="M0.3 2.6L3.6 0.2L3.9 3.6Z" fill="#555"/></svg>
<svg class="a" style="left:142.0px;top:25.95px" width="9" height="9" viewBox="0 0 9 9"><circle cx="2.6" cy="6.4" r="1.7" fill="none" stroke="#555" stroke-width="0.9"/><circle cx="6.4" cy="2.6" r="1.7" fill="none" stroke="#555" stroke-width="0.9"/><path d="M3.8 5.2L5.2 3.8" stroke="#555" stroke-width="0.9"/></svg>
<div class="a" style="left:13px;top:38.90px;width:230px;height:15.3px;background:#efefef"></div>
<svg class="a" style="left:21px;top:41.40px" width="11" height="11" viewBox="0 0 11 11"><path d="M2.5 1.2H8.5M3.5 1.2L2.8 5.5L1.3 9.3H9.7L8.2 5.5L7.5 1.2" fill="none" stroke="#666" stroke-width="0.9"/></svg>
<div class="a" style="left:39.5px;top:42.20px;font-size:8.8px;letter-spacing:-0.24px;font-weight:bold;color:#222">Coque</div>
<div class="chev" style="left:230.0px;top:43.4px;width:4px;height:4px;border-color:#333"></div>
<div class="a" style="left:24px;top:58.95px;font-size:8.5px;letter-spacing:-0.22px;color:#2a2a2a">Épaisseur de la paroi</div>
<div class="a" style="left:170.5px;top:56.25px;width:72.5px;height:14.5px;border:1px solid #b3b3b3;background:#fff"></div>
<div class="a" style="left:174.5px;top:59.15px;font-size:7.9px;color:#333">0.8</div>
<div class="a" style="left:150px;width:89px;text-align:right;top:59.15px;font-size:7.9px;color:#aaa">mm</div>
<div class="a" style="left:24px;top:75.40px;font-size:8.5px;letter-spacing:-0.22px;color:#2a2a2a">Épaisseur du dessus/dessous</div>
<div class="a" style="left:170.5px;top:72.70px;width:72.5px;height:14.5px;border:1px solid #b3b3b3;background:#fff"></div>
<div class="a" style="left:174.5px;top:75.60px;font-size:7.9px;color:#333">0.8</div>
<div class="a" style="left:150px;width:89px;text-align:right;top:75.60px;font-size:7.9px;color:#aaa">mm</div>
<div class="a" style="left:13px;top:88.25px;width:230px;height:15.3px;background:#efefef"></div>
<svg class="a" style="left:21px;top:90.75px" width="11" height="11" viewBox="0 0 11 11"><path d="M1 1H9.5V9.5H1Z" fill="none" stroke="#666" stroke-width="0.9" stroke-dasharray="1.2 0.8"/><circle cx="5.2" cy="5.2" r="2.3" fill="none" stroke="#666" stroke-width="0.8"/></svg>
<div class="a" style="left:39.5px;top:91.55px;font-size:8.8px;letter-spacing:-0.24px;font-weight:bold;color:#222">Remplissage</div>
<div class="chev" style="left:230.0px;top:92.8px;width:4px;height:4px;border-color:#333"></div>
<div class="a" style="left:24px;top:108.30px;font-size:8.5px;letter-spacing:-0.37px;font-style:italic;color:#2a2a2a">Densité du remplissage</div>
<div class="a" style="left:170.5px;top:105.60px;width:72.5px;height:14.5px;border:1px solid #b3b3b3;background:#fff"></div>
<div class="a" style="left:174.5px;top:108.50px;font-size:7.9px;color:#333">40</div>
<div class="a" style="left:150px;width:89px;text-align:right;top:108.50px;font-size:7.9px;color:#aaa">%</div>
<svg class="a" style="left:155.0px;top:108.20px" width="9" height="9" viewBox="0 0 9 9"><path d="M2.9 1.9A3.2 3.2 0 1 1 3.6 8" fill="none" stroke="#555" stroke-width="1.1"/><path d="M0.3 2.6L3.6 0.2L3.9 3.6Z" fill="#555"/></svg>
<div class="a" style="left:24px;top:124.75px;font-size:8.5px;letter-spacing:-0.22px;color:#2a2a2a">Étapes de remplissage progressif</div>
<div class="a" style="left:170.5px;top:122.05px;width:72.5px;height:14.5px;border:1px solid #b3b3b3;background:#fff"></div>
<div class="a" style="left:174.5px;top:124.95px;font-size:7.9px;color:#333">0</div>
<div class="a" style="left:13px;top:137.60px;width:230px;height:15.3px;background:#efefef"></div>
<svg class="a" style="left:21px;top:140.10px" width="11" height="11" viewBox="0 0 11 11"><path d="M1.5 1V9.5M3.8 0.5V9M6.2 1V9.5M8.8 1V9.5" stroke="#777" stroke-width="1.1"/></svg>
<div class="a" style="left:39.5px;top:140.90px;font-size:8.8px;letter-spacing:-0.24px;font-weight:bold;color:#222">Matériau</div>
<div class="chev" style="left:230.0px;top:142.1px;width:4px;height:4px;border-color:#333"></div>
<div class="a" style="left:24px;top:157.65px;font-size:8.5px;letter-spacing:-0.37px;font-style:italic;color:#2a2a2a">Température d'impression</div>
<div class="a" style="left:170.5px;top:154.95px;width:72.5px;height:14.5px;border:1px solid #b3b3b3;background:#fff"></div>
<div class="a" style="left:174.5px;top:157.85px;font-size:7.9px;color:#333">200</div>
<div class="a" style="left:150px;width:89px;text-align:right;top:157.85px;font-size:7.9px;color:#aaa">°C</div>
<div class="a" style="left:155.0px;top:157.85px;width:8px;height:8px;border-radius:50%;background:#777;color:#fff;font-size:6.5px;font-weight:bold;text-align:center;line-height:8px">i</div>
<svg class="a" style="left:142.0px;top:157.55px" width="9" height="9" viewBox="0 0 9 9"><path d="M2.9 1.9A3.2 3.2 0 1 1 3.6 8" fill="none" stroke="#555" stroke-width="1.1"/><path d="M0.3 2.6L3.6 0.2L3.9 3.6Z" fill="#555"/></svg>
<div class="a" style="left:24px;top:174.10px;font-size:8.5px;letter-spacing:-0.22px;color:#2a2a2a">Température du plateau</div>
<div class="a" style="left:170.5px;top:171.40px;width:72.5px;height:14.5px;border:1px solid #b3b3b3;background:#fff"></div>
<div class="a" style="left:174.5px;top:174.30px;font-size:7.9px;color:#333">60</div>
<div class="a" style="left:150px;width:89px;text-align:right;top:174.30px;font-size:7.9px;color:#aaa">°C</div>
<svg class="a" style="left:155.0px;top:174.00px" width="9" height="9" viewBox="0 0 9 9"><circle cx="2.6" cy="6.4" r="1.7" fill="none" stroke="#555" stroke-width="0.9"/><circle cx="6.4" cy="2.6" r="1.7" fill="none" stroke="#555" stroke-width="0.9"/><path d="M3.8 5.2L5.2 3.8" stroke="#555" stroke-width="0.9"/></svg>
<div class="a" style="left:24px;top:190.55px;font-size:8.5px;letter-spacing:-0.22px;color:#2a2a2a">Diamètre</div>
<div class="a" style="left:170.5px;top:187.85px;width:72.5px;height:14.5px;border:1px solid #b3b3b3;background:#fff"></div>
<div class="a" style="left:174.5px;top:190.75px;font-size:7.9px;color:#333">1.74</div>
<div class="a" style="left:150px;width:89px;text-align:right;top:190.75px;font-size:7.9px;color:#aaa">mm</div>
<div class="a" style="left:24px;top:207.00px;font-size:8.5px;letter-spacing:-0.22px;color:#2a2a2a">Débit</div>
<div class="a" style="left:170.5px;top:204.30px;width:72.5px;height:14.5px;border:1px solid #b3b3b3;background:#fff"></div>
<div class="a" style="left:174.5px;top:207.20px;font-size:7.9px;color:#333">100</div>
<div class="a" style="left:150px;width:89px;text-align:right;top:207.20px;font-size:7.9px;color:#aaa">%</div>
<div class="a" style="left:24px;top:223.45px;font-size:8.5px;letter-spacing:-0.22px;color:#2a2a2a">Activer la rétraction</div>
<div class="a" style="left:170.5px;top:220.75px;width:14.5px;height:14.5px;border:1px solid #999;background:#fff"></div>
<svg class="a" style="left:173.5px;top:223.65px" width="9" height="9" viewBox="0 0 9 9"><path d="M1.5 4.6L3.6 6.8L7.6 2.2" fill="none" stroke="#111" stroke-width="1.4"/></svg>
<div class="a" style="left:13px;top:236.30px;width:230px;height:15.3px;background:#efefef"></div>
<svg class="a" style="left:21px;top:238.80px" width="11" height="11" viewBox="0 0 11 11"><circle cx="5.2" cy="5.2" r="4.2" fill="none" stroke="#444" stroke-width="0.9"/><path d="M5.2 5.2L6.8 3.3" stroke="#444" stroke-width="1"/></svg>
<div class="a" style="left:39.5px;top:239.60px;font-size:8.8px;letter-spacing:-0.24px;font-weight:bold;color:#222">Vitesse</div>
<div class="chev" style="left:230.0px;top:240.8px;width:4px;height:4px;border-color:#333"></div>
<div class="a" style="left:214px;top:240.10px;width:8px;height:8px;border-radius:50%;background:#888;color:#fff;font-size:6.5px;font-weight:bold;text-align:center;line-height:8px">i</div>
<div class="a" style="left:24px;top:256.35px;font-size:8.5px;letter-spacing:-0.37px;font-style:italic;color:#2a2a2a">Vitesse d'impression</div>
<div class="a" style="left:170.5px;top:253.65px;width:72.5px;height:14.5px;border:1px solid #b3b3b3;background:#fff"></div>
<div class="a" style="left:174.5px;top:256.55px;font-size:7.9px;color:#333">70</div>
<div class="a" style="left:150px;width:89px;text-align:right;top:256.55px;font-size:7.9px;color:#aaa">mm/s</div>
<svg class="a" style="left:155.0px;top:256.25px" width="9" height="9" viewBox="0 0 9 9"><path d="M2.9 1.9A3.2 3.2 0 1 1 3.6 8" fill="none" stroke="#555" stroke-width="1.1"/><path d="M0.3 2.6L3.6 0.2L3.9 3.6Z" fill="#555"/></svg>
<div class="a" style="left:24px;top:272.80px;font-size:8.5px;letter-spacing:-0.22px;color:#2a2a2a">Vitesse de déplacement</div>
<div class="a" style="left:170.5px;top:270.10px;width:72.5px;height:14.5px;border:1px solid #b3b3b3;background:#fff"></div>
<div class="a" style="left:174.5px;top:273.00px;font-size:7.9px;color:#333">120</div>
<div class="a" style="left:150px;width:89px;text-align:right;top:273.00px;font-size:7.9px;color:#aaa">mm/s</div>
<div class="a" style="left:13px;top:285.65px;width:230px;height:15.3px;background:#efefef"></div>
<svg class="a" style="left:21px;top:288.15px" width="11" height="11" viewBox="0 0 11 11"><path d="M5.2 0.6V9.8M0.6 5.2H9.8M1.9 1.9L8.5 8.5M8.5 1.9L1.9 8.5" stroke="#444" stroke-width="0.9"/><circle cx="5.2" cy="5.2" r="1.3" fill="#fff"/></svg>
<div class="a" style="left:39.5px;top:288.95px;font-size:8.8px;letter-spacing:-0.24px;font-weight:bold;color:#222">Refroidissement</div>
<div class="chev" style="left:230.0px;top:290.1px;width:4px;height:4px;border-color:#333"></div>
<div class="a" style="left:24px;top:305.70px;font-size:8.5px;letter-spacing:-0.22px;color:#2a2a2a">Activer le refroidi...ent de l'impression</div>
<div class="a" style="left:170.5px;top:303.00px;width:14.5px;height:14.5px;border:1px solid #999;background:#fff"></div>
<svg class="a" style="left:173.5px;top:305.90px" width="9" height="9" viewBox="0 0 9 9"><path d="M1.5 4.6L3.6 6.8L7.6 2.2" fill="none" stroke="#111" stroke-width="1.4"/></svg>
<div class="a" style="left:13px;top:318.55px;width:230px;height:15.3px;background:#efefef"></div>
<svg class="a" style="left:21px;top:321.05px" width="11" height="11" viewBox="0 0 11 11"><path d="M3 8V3H6.5L8 5V9M1 6.5L3 9" fill="none" stroke="#555" stroke-width="1"/><path d="M1 7H3V9.5H1Z" fill="#222"/></svg>
<div class="a" style="left:39.5px;top:321.85px;font-size:8.8px;letter-spacing:-0.24px;font-weight:bold;color:#222">Supports</div>
<div class="chev" style="left:230.0px;top:323.0px;width:4px;height:4px;border-color:#333"></div>
<div class="a" style="left:250px;top:6px;width:5px;height:241px;border-radius:2.5px;background:#222"></div>
</div>
<div class="a" style="left:768px;top:547.5px;width:256px;height:3.5px;background:#efefef"></div>
<div class="a" style="left:781px;top:563.5px;font-size:8.2px;font-weight:bold;color:#111">Prêt à Enregistrer sous Fichier</div>
<div class="a" style="left:781px;top:574.8px;width:230px;height:3px;background:#efefef"></div>
<div class="a" style="left:781px;top:584px;font-size:9.8px;font-weight:bold;color:#111">00h 32min</div>
<div class="a" style="left:781px;top:595.5px;font-size:7.6px;color:#333">0.75m / ~ 2g / ~ € 0.06</div>
<div class="a" style="left:892px;top:586px;width:119px;height:18.5px;background:#1ba7e0"></div>
<div class="a" style="left:892px;width:119px;text-align:center;top:590px;font-size:8.2px;font-weight:bold;color:#fff">Enregistrer sous Fichier</div>

<!-- taskbar -->
<div class="a" style="left:0;top:615px;width:1024px;height:25px;background:#0c0f13"></div>
<div class="a" style="left:0;top:615px;width:29.5px;height:25px;background:#000"></div>
<svg class="a" style="left:9.5px;top:622.5px" width="11" height="11" viewBox="0 0 11 11"><path d="M0 1.5L4.7 0.9V5.1H0ZM5.3 0.8L11 0V5.1H5.3ZM0 5.9H4.7V10.1L0 9.5ZM5.3 5.9H11V11L5.3 10.2Z" fill="#fff"/></svg>
<div class="a" style="left:29.5px;top:615px;width:210px;height:25px;background:#f0f0f0"></div>
<div class="a" style="left:35.5px;top:621px;width:12.5px;height:12.5px;border-radius:50%;border:1.6px solid #111"></div>
<div class="a" style="left:54px;top:622.5px;font-size:8.9px;color:#333">Taper ici pour rechercher</div>
<svg class="a" style="left:222px;top:621.5px" width="8" height="12" viewBox="0 0 8 12"><rect x="2.2" y="0.7" width="3.6" height="7" rx="1.6" fill="none" stroke="#555" stroke-width="1"/><path d="M4 8V11M2.2 11H5.8" stroke="#555" stroke-width="1"/></svg>
<svg class="a" style="left:248px;top:622px" width="11" height="10" viewBox="0 0 11 10"><path d="M1 1.5H7.5V8.5H1Z M0 0.5H2M6.5 0.5H8.5M0 9.5H2M6.5 9.5H8.5" fill="none" stroke="#ccc" stroke-width="1"/><path d="M10 0V2M10 3.5V10" stroke="#ccc" stroke-width="1"/></svg>
<div class="a" style="left:330px;top:615px;width:29px;height:25px;background:#1e2328"></div>
<div class="a" style="left:569px;top:615px;width:29.5px;height:25px;background:#3a3e43"></div>
<div class="a" style="left:272px;top:638px;width:25px;height:2px;background:#8fc3ee"></div>
<div class="a" style="left:302px;top:638px;width:25px;height:2px;background:#8fc3ee"></div>
<div class="a" style="left:362px;top:638px;width:24px;height:2px;background:#8fc3ee"></div>
<div class="a" style="left:541px;top:638px;width:24px;height:2px;background:#8fc3ee"></div>
<div class="a" style="left:569px;top:638px;width:29px;height:2px;background:#8fc3ee"></div>
<svg class="a" style="left:278px;top:620.5px" width="14" height="14" viewBox="0 0 14 14"><path d="M0 2H5L6 3.5H13V12H0Z" fill="#f5d16b"/><path d="M0 5H13V12H0Z" fill="#fbe08a"/><path d="M3 8H10V12H3Z" fill="#3aa0d8"/></svg>
<svg class="a" style="left:307px;top:620.5px" width="14" height="14" viewBox="0 0 14 14"><circle cx="7" cy="7" r="6.2" fill="#e8571e"/><path d="M7 1A6 6 0 0 1 13 7A6 6 0 0 1 5 12.6C9 11 10 8 8 5.5C7 4.5 5.5 5 5 6C4 4 5 2 7 1Z" fill="#ffb526"/><circle cx="6" cy="7.5" r="2.3" fill="#3b3fb0"/></svg>
<svg class="a" style="left:336px;top:620.5px" width="14" height="14" viewBox="0 0 14 14"><path d="M12.5 7.5H3.5C3.8 10 6 11.2 8 11.2C9.8 11.2 11.2 10.6 12.3 9.8V12C11 12.8 9.5 13.2 7.8 13.2C3.5 13.2 1 10.5 1 7C1 3.2 3.8 0.8 7.5 0.8C11 0.8 13 3.2 13 6.3ZM3.6 5.8H10.2C10 4 8.9 3 7 3C5.3 3 4 4 3.6 5.8Z" fill="#1b7fd8"/></svg>
<svg class="a" style="left:367px;top:620.5px" width="14" height="14" viewBox="0 0 14 14"><circle cx="7" cy="7" r="6.3" fill="#76b83f"/><path d="M4.2 3.5V8C4.2 9.8 5.2 10.8 7 10.8C8.8 10.8 9.8 9.8 9.8 8V3.5" fill="none" stroke="#fff" stroke-width="1.9"/></svg>
<svg class="a" style="left:397px;top:620.5px" width="14" height="14" viewBox="0 0 14 14"><path d="M1 3.5L8 1.2L13 3.5V10.5L6 13L1 10.5Z" fill="#d9232b"/><path d="M4 5.5L9.5 3.8M4 7.8L9.5 6M4 10L7 9" stroke="#fff" stroke-width="1"/></svg>
<svg class="a" style="left:427px;top:620.5px" width="14" height="14" viewBox="0 0 14 14"><path d="M7 0.5L13.5 7L7 13.5L0.5 7Z" fill="#5fb8d8"/><path d="M4.5 4V10M4.5 7L9 3M5.5 7.5L9 11" stroke="#1b3a4d" stroke-width="1.2"/></svg>
<svg class="a" style="left:457px;top:620.5px" width="14" height="14" viewBox="0 0 14 14"><circle cx="7" cy="7.5" r="5.8" fill="#e8c94a"/><path d="M1.5 6.5C2 2.5 4.5 1 7 1C10 1 12.5 3 12.5 6C10 3.5 4 3.5 1.5 6.5Z" fill="#555"/><circle cx="8.5" cy="8" r="1.2" fill="#222"/></svg>
<svg class="a" style="left:487px;top:620.5px" width="14" height="14" viewBox="0 0 14 14"><circle cx="7" cy="7" r="6.3" fill="#4b8fd6"/><circle cx="7" cy="7" r="5.5" fill="none" stroke="#8dbdf0" stroke-width="0.8"/><text x="7" y="9.5" font-size="7" font-family="Liberation Sans" fill="#fff" text-anchor="middle">qb</text></svg>
<svg class="a" style="left:516px;top:620.5px" width="14" height="14" viewBox="0 0 14 14"><rect x="1.5" y="1" width="10.5" height="8" fill="#b8d4ec"/><rect x="2.5" y="2" width="8.5" height="5.5" fill="#4a7db8"/><path d="M4.5 10.5H10L11 13H3.5Z" fill="#ddd"/></svg>
<svg class="a" style="left:546px;top:620.5px" width="14" height="14" viewBox="0 0 14 14"><rect x="0.5" y="0.5" width="13" height="13" fill="#f3e2cc"/><path d="M4.5 2.5H10V4.5H6.8V6.5H9.5V8.5H6.8V11.5H4.5Z" fill="#e08a2a"/></svg>
<svg class="a" style="left:576px;top:620.5px" width="14" height="14" viewBox="0 0 14 14"><path d="M2.5 0.5H12L13.5 2V11.5L11.5 13.5H2L0.5 12V2.5Z" fill="#1ba7e0"/><path d="M9.6 4.8A3 3 0 1 0 9.6 9.2" stroke="#fff" stroke-width="2" fill="none"/></svg>
<svg class="a" style="left:885px;top:622px" width="11" height="10" viewBox="0 0 11 10"><circle cx="3.5" cy="4" r="1.8" fill="none" stroke="#ddd" stroke-width="0.9"/><circle cx="7.5" cy="2.5" r="1.6" fill="none" stroke="#ddd" stroke-width="0.9"/><path d="M0.5 9.5C0.8 7 2 6 3.5 6C5 6 6.2 7 6.5 9.5M5.5 5C6 4.4 6.8 4.3 7.5 4.3C9 4.3 10.2 5.3 10.5 7.5" fill="none" stroke="#ddd" stroke-width="0.9"/></svg>
<svg class="a" style="left:908px;top:625px" width="9" height="6" viewBox="0 0 9 6"><path d="M0.5 5L4.5 1L8.5 5" fill="none" stroke="#ddd" stroke-width="1"/></svg>
<svg class="a" style="left:922px;top:623px" width="11" height="10" viewBox="0 0 11 10"><rect x="0.5" y="0.5" width="2.5" height="5" fill="none" stroke="#ddd" stroke-width="0.8"/><rect x="3" y="1.5" width="7.5" height="5.5" fill="none" stroke="#ddd" stroke-width="0.9"/><path d="M4 9.5H8M6 7V9.5" stroke="#ddd" stroke-width="0.9"/></svg>
<svg class="a" style="left:937px;top:623px" width="10" height="9" viewBox="0 0 10 9"><path d="M0.5 3H2.5L5 0.8V8.2L2.5 6H0.5Z" fill="none" stroke="#ddd" stroke-width="0.9"/><path d="M6.5 2.8C7.2 3.8 7.2 5.2 6.5 6.2M8 1.5C9.3 3.2 9.3 5.8 8 7.5" fill="none" stroke="#ddd" stroke-width="0.8"/></svg>
<div class="a" style="left:952px;top:617.5px;width:36px;text-align:center;font-size:7.4px;color:#eee">14:02</div>
<div class="a" style="left:948px;top:628.2px;width:44px;text-align:center;font-size:7.4px;color:#eee">05/01/2019</div>
<svg class="a" style="left:998px;top:622px" width="12" height="12" viewBox="0 0 12 12"><path d="M0.7 0.7H11.3V8.5H7L6 10L5 8.5H0.7Z" fill="none" stroke="#ddd" stroke-width="1"/></svg>
<div class="a" style="left:1020px;top:615px;width:1px;height:25px;background:#555"></div>
</body></html>
